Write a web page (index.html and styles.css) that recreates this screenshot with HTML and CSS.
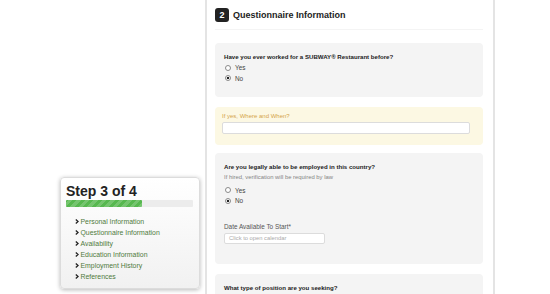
FILE: index.html
```html
<!DOCTYPE html>
<html lang="en">
<head>
  <meta charset="UTF-8">
  <meta name="viewport" content="width=device-width, initial-scale=1.0">
  <title>Questionnaire Information</title>
  <link rel="stylesheet" href="styles.css">
</head>
<body>
  <div class="page">
    <aside class="sidebar">
      <div class="steps">
        <h2>Step 3 of 4</h2>
        <div class="progress"><div class="progress-bar" style="width: 60%"></div></div>
        <ul class="step-list">
          <li><svg class="chev" viewBox="0 0 4 5"><polyline points="0.8,0.6 3,2.5 0.8,4.4"/></svg>Personal Information</li>
          <li><svg class="chev" viewBox="0 0 4 5"><polyline points="0.8,0.6 3,2.5 0.8,4.4"/></svg>Questionnaire Information</li>
          <li><svg class="chev" viewBox="0 0 4 5"><polyline points="0.8,0.6 3,2.5 0.8,4.4"/></svg>Availability</li>
          <li><svg class="chev" viewBox="0 0 4 5"><polyline points="0.8,0.6 3,2.5 0.8,4.4"/></svg>Education Information</li>
          <li><svg class="chev" viewBox="0 0 4 5"><polyline points="0.8,0.6 3,2.5 0.8,4.4"/></svg>Employment History</li>
          <li><svg class="chev" viewBox="0 0 4 5"><polyline points="0.8,0.6 3,2.5 0.8,4.4"/></svg>References</li>
        </ul>
      </div>
    </aside>

    <main class="form-col">
      <div class="section-head">
        <span class="badge">2</span>
        <h1>Questionnaire Information</h1>
      </div>

      <div class="panel panel-first">
        <p class="question">Have you ever worked for a SUBWAY® Restaurant before?</p>
        <div class="radios">
          <div class="radio"><span class="dot"></span>Yes</div>
          <div class="radio"><span class="dot checked"></span>No</div>
        </div>
      </div>

      <div class="panel panel-warn">
        <label class="warn-label">If yes, Where and When?</label>
        <div class="text-input wide"></div>
      </div>

      <div class="panel panel-legal">
        <p class="question">Are you legally able to be employed in this country?</p>
        <p class="hint">If hired, verification will be required by law</p>
        <div class="radios">
          <div class="radio"><span class="dot"></span>Yes</div>
          <div class="radio"><span class="dot checked"></span>No</div>
        </div>
        <label class="field-label">Date Available To Start*</label>
        <div class="text-input date">Click to open calendar</div>
      </div>

      <div class="panel panel-last">
        <p class="question">What type of position are you seeking?</p>
      </div>
    </main>
  </div>
</body>
</html>
```

FILE: styles.css
```css
body {
  margin: 0;
  background-color: #fff;
  font-family: "Liberation Sans", Arial, Helvetica, sans-serif;
  color: #333;
}

.page {
  display: flex;
  align-items: flex-start;
  height: 294px;
  overflow: hidden;
}

/* Step sidebar */
.sidebar {
  width: 205px;
  padding: 177px 0 0 60px;
  box-sizing: border-box;
}

.steps {
  width: 140px;
  height: 112px;
  box-sizing: border-box;
  padding: 6px 6px 0;
  border: 1px solid #dcdcdc;
  border-radius: 4px;
  background: linear-gradient(#fff, #f1f1f1);
  box-shadow: 0 1px 4px rgba(0, 0, 0, 0.28);
}

.steps h2 {
  margin: -1px 0 0 -1px;
  font-size: 14px;
  line-height: 16px;
  color: #222;
}

.progress {
  height: 7px;
  margin-top: 1px;
  width: 127px;
  margin-left: -1px;
  background-color: #ececec;
  border-radius: 1px;
}

.progress-bar {
  height: 100%;
  border-radius: 1px;
  background-color: #57b84f;
  background-image: repeating-linear-gradient(-45deg, rgba(255, 255, 255, 0.18) 0 3px, transparent 3px 6px);
}

.step-list {
  list-style: none;
  margin: 9px 0 0;
  padding: 0 0 0 8px;
}

.step-list li {
  display: flex;
  align-items: center;
  height: 11px;
  font-size: 6.9px;
  color: #4f7a3c;
}

.chev {
  width: 4px;
  height: 5px;
  margin-right: 1.5px;
  fill: none;
  stroke: #222;
  stroke-width: 1.3;
}

/* Form column */
.form-col {
  width: 290px;
  height: 294px;
  box-sizing: border-box;
  padding: 0 10px 0 8px;
  border-left: 2px solid #e4e4e4;
  border-right: 2px solid #e4e4e4;
}

.section-head {
  display: flex;
  align-items: center;
  height: 28px;
  padding-top: 1px;
  border-bottom: 1px solid #f4f4f4;
  margin-bottom: 13px;
}

.badge {
  width: 14px;
  height: 14px;
  border-radius: 3px;
  background-color: #222;
  color: #fff;
  font-size: 9px;
  font-weight: bold;
  line-height: 14px;
  text-align: center;
}

.section-head h1 {
  margin: 0 0 0 4px;
  font-size: 9px;
  color: #222;
}

.panel {
  background-color: #f4f4f4;
  border-radius: 4px;
  padding: 10px 9px 0;
  margin-bottom: 10px;
}

.panel-first {
  padding-bottom: 13px;
}

.question {
  margin: 0;
  font-size: 6.1px;
  font-weight: bold;
  line-height: 8px;
  color: #222;
}

.radios {
  margin-top: 1.5px;
}

.radio {
  display: flex;
  align-items: center;
  height: 10.6px;
  font-size: 6.4px;
  color: #444;
}

.dot {
  width: 4px;
  height: 4px;
  margin: 0 4px 0 1px;
  border: 0.8px solid #8a8a8a;
  border-radius: 50%;
  background-color: #fff;
}

.dot.checked {
  background: radial-gradient(circle, #222 0 1.3px, #fff 1.6px);
}

.panel-warn {
  background-color: #fcf8e3;
  padding: 5px 13px 11px 7px;
  margin-bottom: 8px;
}

.warn-label {
  display: block;
  font-size: 6px;
  line-height: 8px;
  color: #d4a44a;
}

.text-input {
  box-sizing: border-box;
  background-color: #fff;
  border: 1px solid #dcdcdc;
  border-radius: 2px;
}

.text-input.wide {
  height: 12px;
  margin-top: 2px;
}

.panel-legal {
  padding-top: 10.5px;
  padding-bottom: 20px;
}

.hint {
  margin: 2px 0 0;
  font-size: 5.9px;
  line-height: 8px;
  color: #858585;
}

.panel-legal .radios {
  margin-top: 3.7px;
}

.field-label {
  display: block;
  margin-top: 16.7px;
  font-size: 6.4px;
  line-height: 8px;
  color: #555;
}

.text-input.date {
  width: 101px;
  height: 11px;
  margin-top: 2.7px;
  padding-left: 4px;
  font-size: 5.8px;
  line-height: 9px;
  color: #aaa;
}

.panel-last {
  height: 40px;
}
```
